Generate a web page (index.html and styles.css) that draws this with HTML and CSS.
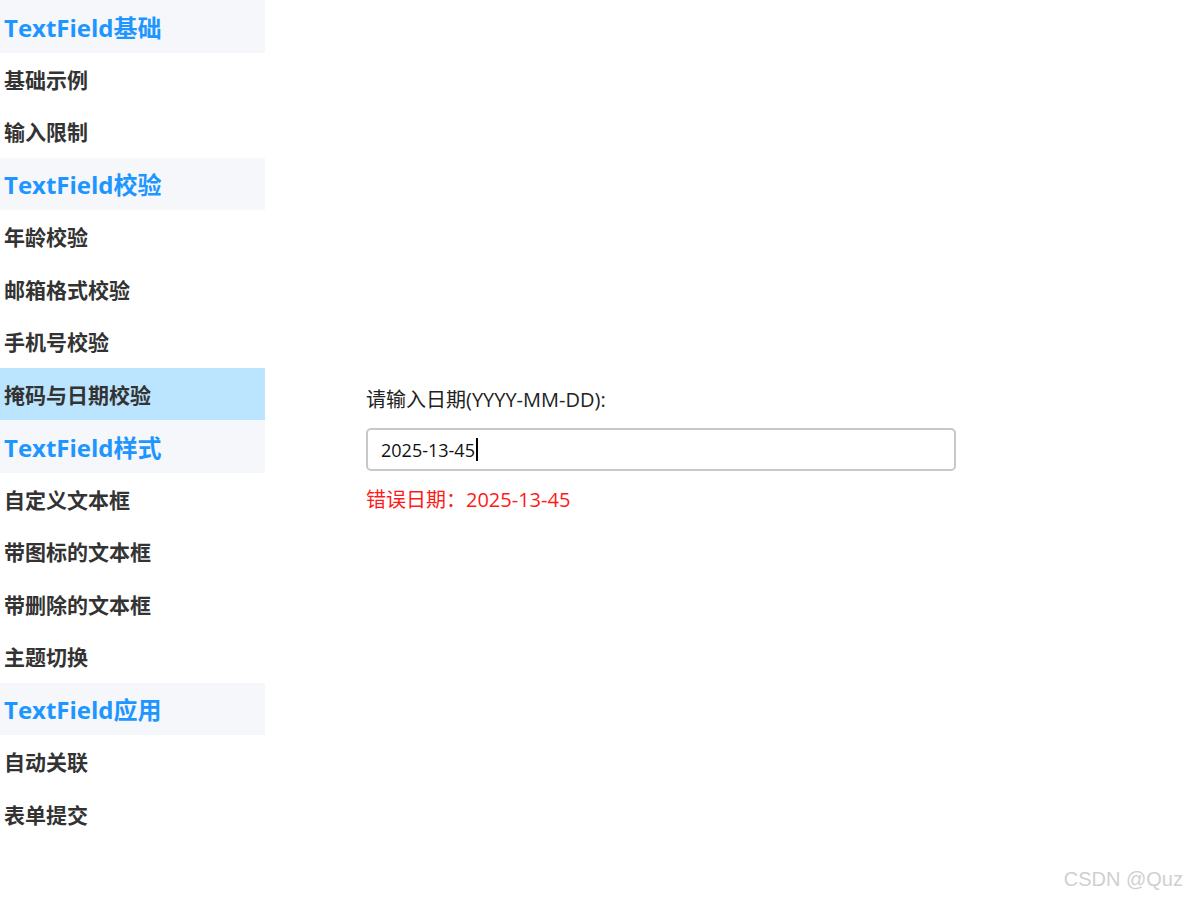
FILE: index.html
```html
<!DOCTYPE html>
<html lang="zh">
<head>
<meta charset="utf-8">
<title>TextField</title>
<link rel="stylesheet" href="styles.css">
</head>
<body>
<div class="app">
  <nav class="sidebar">
    <div class="row group">TextField基础</div>
    <div class="row item">基础示例</div>
    <div class="row item">输入限制</div>
    <div class="row group">TextField校验</div>
    <div class="row item">年龄校验</div>
    <div class="row item">邮箱格式校验</div>
    <div class="row item">手机号校验</div>
    <div class="row item active">掩码与日期校验</div>
    <div class="row group">TextField样式</div>
    <div class="row item">自定义文本框</div>
    <div class="row item">带图标的文本框</div>
    <div class="row item">带删除的文本框</div>
    <div class="row item">主题切换</div>
    <div class="row group">TextField应用</div>
    <div class="row item">自动关联</div>
    <div class="row item">表单提交</div>
  </nav>
  <main class="main">
    <div class="form">
      <div class="label">请输入日期(YYYY-MM-DD):</div>
      <div class="input"><span class="value">2025-13-45</span><span class="caret"></span></div>
      <div class="error">错误日期：2025-13-45</div>
    </div>
  </main>
</div>
<div class="watermark">CSDN @Quz</div>
</body>
</html>
```
FILE: styles.css
```css
html, body {
  margin: 0;
  padding: 0;
  background: #fff;
  font-family: "Open Sans", "Noto Sans CJK SC", sans-serif;
}
.app {
  display: flex;
  height: 897px;
}
.sidebar {
  width: 265px;
  flex: none;
  display: flex;
  flex-direction: column;
}
.row {
  height: 52.5px;
  display: flex;
  align-items: center;
  padding-left: 4px;
  box-sizing: border-box;
}
.group {
  background: #f5f7fa;
  color: #1e96ff;
  font-size: 24px;
  font-weight: 700;
}
.item {
  color: #333;
  font-size: 21px;
  font-weight: 700;
}
.item.active {
  background: #bbe4fe;
}
.main {
  flex: 1;
  display: flex;
  align-items: center;
  padding-left: 101px;
}
.form {
  width: 590px;
  display: flex;
  flex-direction: column;
  margin-top: 3px;
}
.label {
  font-size: 20px;
  color: #222;
  line-height: 28px;
}
.input {
  margin-top: 14px;
  height: 43px;
  border: 2px solid #c8c8c8;
  border-radius: 5px;
  box-sizing: border-box;
  display: flex;
  align-items: center;
  padding-left: 13px;
  font-size: 18px;
  color: #111;
}
.caret {
  display: inline-block;
  width: 2px;
  height: 23px;
  background: #000;
  margin-left: 1px;
}
.error {
  margin-top: 15px;
  font-size: 20px;
  color: #ff1a1a;
  line-height: 28px;
}
.watermark {
  position: absolute;
  right: 4px;
  bottom: 6px;
  font-family: "Liberation Sans", Arial, sans-serif;
  font-size: 20px;
  color: #d0d0d0;
}
```
